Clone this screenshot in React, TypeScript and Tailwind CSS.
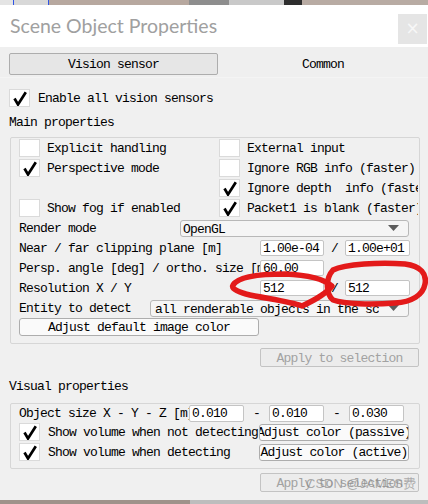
import React from 'react';

const mono = "font-['Liberation_Mono',monospace] text-[13px] tracking-[-0.8px] text-black whitespace-pre";
const txt = `${mono} pt-[2px]`;

function Check({ on }: { on?: boolean }) {
  return (
    <div className="w-[21px] h-[18px] shrink-0 bg-white border border-[#dadada] flex items-center justify-center">
      {on && (
        <svg width="14" height="15" viewBox="0 0 14 15">
          <polyline points="1.5,7.5 5,13.5 12.8,1.2" fill="none" stroke="#000" strokeWidth="2.7" />
        </svg>
      )}
    </div>
  );
}

function Field({ value, w }: { value: string; w: string }) {
  return (
    <div className={`h-[16px] shrink-0 bg-white border border-[#c4c4c4] rounded-[2px] pl-[2px] pt-[1px] leading-[14px] overflow-hidden ${mono} ${w}`}>
      {value}
    </div>
  );
}

function Combo({ text, w, pl }: { text: string; w: string; pl: string }) {
  return (
    <div className={`h-[17px] shrink-0 flex items-center bg-[#f5f5f5] border border-[#b8b8b8] rounded-[3px] pr-[9px] ${pl} ${w}`}>
      <span className={`flex-1 mr-[9px] overflow-hidden leading-[15px] ${txt}`}>{text}</span>
      <svg width="11" height="6" viewBox="0 0 11 6" className="shrink-0">
        <polygon points="0,0 11,0 5.5,6" fill="#5c5c5c" />
      </svg>
    </div>
  );
}

function CheckRow({ on, label, w }: { on?: boolean; label?: string; w: string }) {
  return (
    <div className={`h-[20px] flex items-center overflow-hidden shrink-0 ${w}`}>
      {label !== undefined && (
        <>
          <Check on={on} />
          <span className={`ml-[7px] ${txt}`}>{label}</span>
        </>
      )}
    </div>
  );
}

function Apply() {
  return (
    <div className={`ml-[260px] w-[159px] h-[19px] bg-[#ececec] border border-[#c3c3c3] rounded-[2px] flex items-center justify-center pt-[2px] ${mono} !text-[#a2a2a2]`}>
      Apply to selection
    </div>
  );
}

export default function App() {
  return (
    <div className="w-[428px] h-[504px] overflow-hidden relative flex flex-col bg-[#f0f0f0]">
      {/* background behind the window */}
      <div className="h-[5px] flex shrink-0">
        <div className="w-[13px] bg-[#e4e4e4]" />
        <div className="w-[1px] bg-[#2f55e6]" />
        <div className="w-[34px] bg-[#d8d8d8]" />
        <div className="w-[1px] bg-[#2f55e6]" />
        <div className="w-[140px] bg-[#b7a89f]" />
        <div className="w-[40px] bg-[#8e8e8e]" />
        <div className="w-[55px] bg-[#c9c9c9]" />
        <div className="w-[18px] bg-[#2e2e2e]" />
        <div className="flex-1 bg-[#b8aba3]" />
      </div>

      {/* title bar */}
      <div className="h-[42px] bg-white flex justify-between shrink-0">
        <div className="self-center pl-[10px] font-['Lato',sans-serif] text-[19.5px] leading-[24px] text-[#a0a0a0]">
          Scene Object Properties
        </div>
        <div className="mt-[9px] mr-[1px] w-[29px] h-[30px] bg-[#e5e5e5] flex items-center justify-center font-['DejaVu_Sans',sans-serif] text-[17px] text-[#f7f7f7]">
          ×
        </div>
      </div>

      {/* tabs */}
      <div className="h-[31px] flex pt-[6px] pl-[9px] bg-[#efefef] border-b border-[#f4f4f4] shrink-0">
        <div className={`w-[209px] h-[22px] bg-[#e6e6e6] border border-[#adadad] rounded-[2px] flex items-center justify-center pt-[2px] ${mono}`}>
          Vision sensor
        </div>
        <div className={`flex-1 h-[22px] flex items-center justify-center pt-[2px] ${mono}`}>Common</div>
      </div>

      <div className="mt-[11px] h-[18px] pl-[9px] flex items-center shrink-0">
        <Check on />
        <span className={`ml-[8px] ${txt}`}>Enable all vision sensors</span>
      </div>

      <div className={`mt-[5px] h-[20px] pl-[9px] flex items-center shrink-0 ${txt}`}>Main properties</div>

      {/* main properties group */}
      <div className="mt-[5px] ml-[10px] w-[410px] h-[207px] border border-[#d6d6d6] rounded-[2px] pl-[8px] flex flex-col shrink-0">
        <div className="flex">
          <CheckRow w="w-[200px]" label="Explicit handling" />
          <CheckRow w="w-[199px]" label="External input" />
        </div>
        <div className="flex">
          <CheckRow w="w-[200px]" on label="Perspective mode" />
          <CheckRow w="w-[199px]" label="Ignore RGB info (faster)" />
        </div>
        <div className="flex">
          <CheckRow w="w-[200px]" />
          <CheckRow w="w-[199px]" on label="Ignore depth  info (faster)" />
        </div>
        <div className="flex">
          <CheckRow w="w-[200px]" label="Show fog if enabled" />
          <CheckRow w="w-[199px]" on label="Packet1 is blank (faster)" />
        </div>

        <div className="h-[20px] flex items-center">
          <span className={`w-[161px] ${txt}`}>Render mode</span>
          <Combo text="OpenGL" w="w-[229px]" pl="pl-[2px]" />
        </div>
        <div className="h-[20px] flex items-center">
          <span className={`w-[241px] shrink-0 overflow-hidden ${txt}`}>Near / far clipping plane [m]</span>
          <Field value="1.00e-04" w="w-[64px]" />
          <span className={`w-[21px] text-center ${txt}`}>/</span>
          <Field value="1.00e+01" w="w-[65px]" />
        </div>
        <div className="h-[20px] flex items-center">
          <span className={`w-[241px] shrink-0 overflow-hidden ${txt}`}>Persp. angle [deg] / ortho. size [m]</span>
          <Field value="60.00" w="w-[64px]" />
        </div>
        <div className="h-[20px] flex items-center">
          <span className={`w-[241px] shrink-0 overflow-hidden ${txt}`}>Resolution X / Y</span>
          <Field value="512" w="w-[64px]" />
          <span className={`w-[21px] text-center ${txt}`}>/</span>
          <Field value="512" w="w-[65px]" />
        </div>
        <div className="h-[20px] flex items-center">
          <span className={`w-[131px] shrink-0 ${txt}`}>Entity to detect</span>
          <Combo text="all renderable objects in the scene" w="w-[259px]" pl="pl-[4px]" />
        </div>
        <div className={`h-[18px] w-[240px] bg-[#fafafa] border border-[#adadad] rounded-[3px] flex items-center justify-center pt-[2px] ${mono}`}>
          Adjust default image color
        </div>
      </div>

      <div className="mt-[4px] shrink-0">
        <Apply />
      </div>

      <div className={`mt-[9px] h-[20px] pl-[9px] flex items-center shrink-0 ${txt}`}>Visual properties</div>

      {/* visual properties group */}
      <div className="mt-[7px] ml-[10px] w-[410px] h-[66px] border border-[#d6d6d6] rounded-[2px] pl-[8px] flex flex-col shrink-0">
        <div className="h-[18px] flex items-center">
          <span className={`w-[170px] shrink-0 overflow-hidden ${txt}`}>Object size X - Y - Z [m]</span>
          <Field value="0.010" w="w-[55px] !h-[17px]" />
          <span className={`w-[25px] text-center ${txt}`}>-</span>
          <Field value="0.010" w="w-[55px] !h-[17px]" />
          <span className={`w-[25px] text-center ${txt}`}>-</span>
          <Field value="0.030" w="w-[55px] !h-[17px]" />
        </div>
        <div className="h-[20px] flex items-center">
          <Check on />
          <span className={`ml-[8px] w-[211px] shrink-0 overflow-hidden ${txt}`}>Show volume when not detecting</span>
          <div className={`w-[150px] h-[17px] shrink-0 bg-[#fafafa] border border-[#adadad] rounded-[3px] flex items-center justify-center overflow-hidden pt-[2px] ${mono}`}>
            Adjust color (passive)
          </div>
        </div>
        <div className="h-[20px] flex items-center">
          <Check on />
          <span className={`ml-[8px] w-[211px] shrink-0 overflow-hidden ${txt}`}>Show volume when detecting</span>
          <div className={`w-[150px] h-[17px] shrink-0 bg-[#fafafa] border border-[#adadad] rounded-[3px] flex items-center justify-center overflow-hidden pt-[2px] ${mono}`}>
            Adjust color (active)
          </div>
        </div>
      </div>

      <div className="mt-[4px] shrink-0">
        <Apply />
      </div>

      <div className="flex-1" />
      <div className="h-[4px] flex shrink-0">
        <div className="w-[190px] bg-[#9f928a]" />
        <div className="flex-1 bg-[#bdbdbd]" />
      </div>

      {/* hand-drawn red marks */}
      <svg className="absolute left-0 top-0 pointer-events-none" width="428" height="504">
        <path
          d="M 233 285 C 238 277, 258 274, 285 274 C 308 275, 324 279, 332 286 C 326 294, 315 300, 302 306 C 288 301, 262 298, 246 294 C 236 291, 231 288, 233 285 Z"
          fill="none" stroke="#e31a1a" strokeWidth="5.5" strokeLinejoin="round"
        />
        <path
          d="M 333 270 C 345 264, 380 262, 405 264 C 421 266, 427 274, 425 284 C 423 295, 412 302, 395 303 C 370 305, 345 304, 333 300 C 326 294, 325 279, 333 270 Z"
          fill="none" stroke="#e31a1a" strokeWidth="5.5" strokeLinejoin="round"
        />
      </svg>

      <div className="absolute left-[306px] top-[476px] font-['Liberation_Sans',sans-serif] text-[13px] leading-[15px] text-[#8c8c8c]/70 whitespace-nowrap pointer-events-none">
        CSDN @JAMES费
      </div>
    </div>
  );
}
